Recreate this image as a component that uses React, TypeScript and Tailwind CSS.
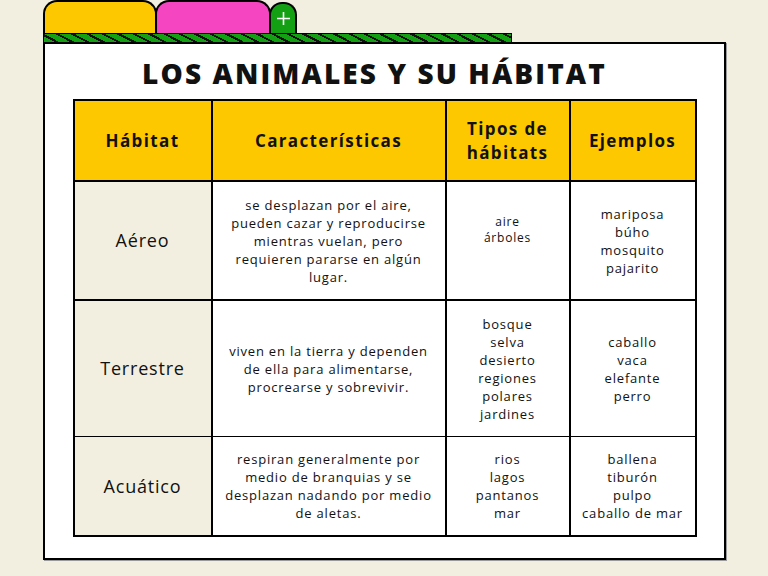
import React from 'react';

interface Row {
  habitat: string;
  desc: string[];
  tipos: string[];
  ejemplos: string[];
  tiposSmall?: boolean;
}

const rows: Row[] = [
  {
    habitat: 'Aéreo',
    desc: ['se desplazan por el aire,', 'pueden cazar y reproducirse', 'mientras vuelan, pero', 'requieren pararse en algún', 'lugar.'],
    tipos: ['aire', 'árboles'],
    ejemplos: ['mariposa', 'búho', 'mosquito', 'pajarito'],
    tiposSmall: true,
  },
  {
    habitat: 'Terrestre',
    desc: ['viven en la tierra y dependen', 'de ella para alimentarse,', 'procrearse y sobrevivir.'],
    tipos: ['bosque', 'selva', 'desierto', 'regiones', 'polares', 'jardines'],
    ejemplos: ['caballo', 'vaca', 'elefante', 'perro'],
  },
  {
    habitat: 'Acuático',
    desc: ['respiran generalmente por', 'medio de branquias y se', 'desplazan nadando por medio', 'de aletas.'],
    tipos: ['rios', 'lagos', 'pantanos', 'mar'],
    ejemplos: ['ballena', 'tiburón', 'pulpo', 'caballo de mar'],
  },
];

const rowHeights = ['h-[119px]', 'h-[136px]', 'h-[98px]'];
const rowBorders = ['border-b-2', 'border-b', 'border-b-0'];

function Lines({ items, className }: { items: string[]; className: string }) {
  return (
    <div className={className}>
      {items.map((l) => (
        <div key={l}>{l}</div>
      ))}
    </div>
  );
}

export default function App() {
  return (
    <div className="w-[768px] h-[576px] bg-[#f3efe0] pl-[43px] font-['Open_Sans',sans-serif] text-[#111]">
      {/* Folder tabs */}
      <div className="flex items-end h-[33px]">
        <div className="w-[114px] h-[33px] bg-[#fdc800] border-2 border-b-0 border-black rounded-t-[14px]" />
        <div className="-ml-[2px] w-[116px] h-[33px] bg-[#f545c1] border-2 border-b-0 border-black rounded-t-[14px]" />
        <div className="-ml-[2px] w-[28px] h-[31px] bg-[#13a013] border-2 border-b-0 border-black rounded-t-[13px] flex items-center justify-center">
          <svg width="15" height="15" viewBox="0 0 15 15">
            <path d="M7.5 1v13M1 7.5h13" stroke="#fff" strokeWidth="1.6" />
          </svg>
        </div>
      </div>
      <div className="w-[469px] h-[9px] border-t border-x border-black bg-[repeating-linear-gradient(27deg,#13a013_0px,#13a013_5px,#111_5px,#111_7px)]" />

      {/* Card */}
      <div className="w-[683px] h-[518px] border-2 border-black bg-white shadow-[1px_1px_0_#9a9a9a] flex flex-col items-center">
        <h1 className="mt-[11px] mr-[20px] h-[36px] text-[28px] leading-[36px] font-extrabold tracking-[0.075em]">
          LOS ANIMALES Y SU HÁBITAT
        </h1>
        <div className="mt-[8px] w-[624px] border-2 border-black">
          {/* Header */}
          <div className="grid grid-cols-[138px_234px_124px_124px] h-[81px] bg-[#fdc800] border-b-2 border-black text-[17px] font-bold leading-[24px] tracking-[0.08em] text-center">
            <div className="border-r-2 border-black flex items-center justify-center">Hábitat</div>
            <div className="border-r-2 border-black flex items-center justify-center">Características</div>
            <div className="border-r-2 border-black flex items-center justify-center">
              Tipos de
              <br />
              hábitats
            </div>
            <div className="flex items-center justify-center">Ejemplos</div>
          </div>
          {rows.map((r, i) => (
            <div
              key={r.habitat}
              className={`grid grid-cols-[138px_234px_124px_124px] ${rowHeights[i]} ${rowBorders[i]} border-black text-center tracking-[0.05em]`}
            >
              <div className="bg-[#f3efe0] border-r-2 border-black flex items-center justify-center text-[18px]">
                {r.habitat}
              </div>
              <div className="border-r-2 border-black flex items-center justify-center">
                <Lines items={r.desc} className="text-[13px] leading-[18px]" />
              </div>
              <div className="border-r-2 border-black flex items-center justify-center">
                <Lines
                  items={r.tipos}
                  className={r.tiposSmall ? 'text-[12px] leading-[16px] mb-[22px]' : 'text-[13px] leading-[18px]'}
                />
              </div>
              <div className="flex items-center justify-center">
                <Lines items={r.ejemplos} className="text-[13px] leading-[18px]" />
              </div>
            </div>
          ))}
        </div>
      </div>
    </div>
  );
}
